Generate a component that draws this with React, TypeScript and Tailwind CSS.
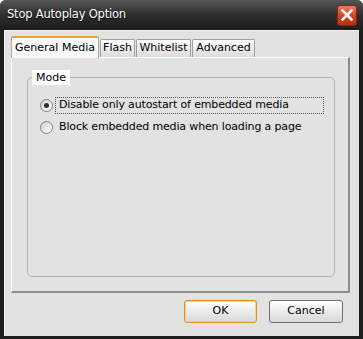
import React from "react";

const font = { fontFamily: '"DejaVu Sans", Verdana, sans-serif' };

const Radio = ({ label, checked, focused }: { label: string; checked?: boolean; focused?: boolean }) => (
  <div className="flex h-[22px] items-center">
    <span className="ml-[12px] flex h-[13px] w-[13px] items-center justify-center rounded-full border border-[#7f7f7f] bg-gradient-to-br from-[#d0d0d0] to-[#ffffff]">
      {checked && <span className="h-[5px] w-[5px] rounded-full bg-[#303030]" />}
    </span>
    <span
      className={
        "ml-[2px] flex h-[17px] items-center pl-[3px] text-[11px] tracking-[-0.15px] text-black " +
        (focused ? "w-[269px] border border-dotted border-[#555]" : "border border-transparent")
      }
    >
      {label}
    </span>
  </div>
);

const Tab = ({ label, width, active }: { label: string; width: string; active?: boolean }) =>
  active ? (
    <div
      className={`relative z-10 -mb-px flex h-[22px] items-center justify-center rounded-t-[2px] border-x border-t-2 border-x-[#a8a8a8] border-t-[#f0a030] bg-[#f8f8f8] text-[11px] text-black ${width}`}
    >
      {label}
    </div>
  ) : (
    <div
      className={`ml-px flex h-[18px] items-center justify-center rounded-t-[2px] border border-b-0 border-[#a0a0a0] bg-gradient-to-b from-[#fdfdfd] to-[#dcdcdc] text-[11px] text-black ${width}`}
    >
      {label}
    </div>
  );

export default function App() {
  return (
    <div className="flex h-[339px] w-[363px] flex-col overflow-hidden rounded-t-[6px] bg-[#1e1e1e]" style={font}>
      <div className="flex h-[30px] items-center justify-between bg-gradient-to-b from-[#565656] via-[#2e2e2e] to-[#1c1c1c] pl-[7px] pr-[6px]">
        <span className="text-[11.5px] tracking-[-0.2px] text-white [text-shadow:0_1px_1px_#000]">Stop Autoplay Option</span>
        <span className="flex h-[21px] w-[20px] items-center justify-center rounded-[3px] border border-[#7a2a18] bg-gradient-to-b from-[#f07a5a] via-[#d9401e] to-[#b83010]">
          <svg width="12" height="12" viewBox="0 0 12 12">
            <path d="M1.5 1.5 L10.5 10.5 M10.5 1.5 L1.5 10.5" stroke="white" strokeWidth="2.6" strokeLinecap="square" />
          </svg>
        </span>
      </div>
      <div className="mx-[4px] mb-[3px] flex flex-1 flex-col border-l border-t border-[#f4f4f4] bg-[#e2e2e2] pl-[6px] pt-[5px]">
        <div className="flex items-end">
          <Tab label="General Media" width="w-[88px]" active />
          <Tab label="Flash" width="w-[35px]" />
          <Tab label="Whitelist" width="w-[55px]" />
          <Tab label="Advanced" width="w-[63px]" />
        </div>
        <div className="flex h-[236px] w-[339px] flex-col border-b-2 border-l border-r-2 border-t border-b-[#8c8c8c] border-l-white border-r-[#8c8c8c] border-t-white">
          <fieldset className="ml-[15px] mt-[12px] h-[207px] w-[308px] rounded-[5px] border border-[#b0b0b0] pl-0">
            <legend className="ml-[4px] bg-white px-[4px] text-[11px] leading-[15px] text-black">Mode</legend>
            <div className="mt-[9px] flex flex-col">
              <Radio label="Disable only autostart of embedded media" checked focused />
              <Radio label="Block embedded media when loading a page" />
            </div>
          </fieldset>
        </div>
        <div className="mr-[16px] mt-[7px] flex justify-end gap-[12px]">
          <button className="h-[23px] w-[73px] rounded-[3px] border border-[#e0901e] bg-gradient-to-b from-[#ffffff] to-[#d8d8d8] text-[11px] text-black shadow-[inset_0_0_0_1px_#fbd08a]">
            OK
          </button>
          <button className="h-[23px] w-[74px] rounded-[3px] border border-[#707070] bg-gradient-to-b from-[#ffffff] to-[#d8d8d8] text-[11px] text-black">
            Cancel
          </button>
        </div>
      </div>
    </div>
  );
}
